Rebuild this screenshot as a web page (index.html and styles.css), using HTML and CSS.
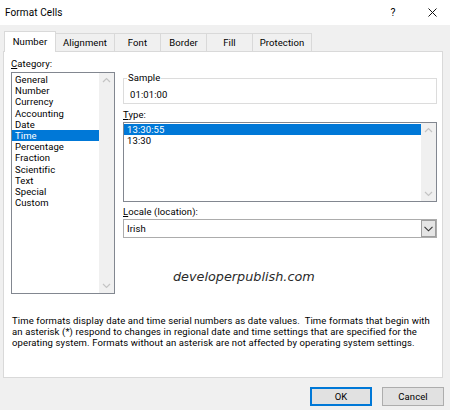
FILE: index.html
```html
<!DOCTYPE html>
<html lang="en">
<head>
<meta charset="utf-8">
<title>Format Cells</title>
<link rel="stylesheet" href="styles.css">
</head>
<body>
<div class="dialog">
  <header class="titlebar">
    <span class="title">Format Cells</span>
    <span class="help">?</span>
    <span class="close" aria-label="Close">
      <svg width="9" height="9" viewBox="0 0 9 9"><path d="M0.5 0.5 L8.5 8.5 M8.5 0.5 L0.5 8.5" stroke="#111" stroke-width="1" fill="none"/></svg>
    </span>
  </header>

  <nav class="tabs">
    <div class="tab tab-active">Number</div>
    <div class="tab tab-wide">Alignment</div>
    <div class="tab">Font</div>
    <div class="tab">Border</div>
    <div class="tab">Fill</div>
    <div class="tab tab-wide">Protection</div>
  </nav>

  <section class="panel">
    <div class="columns">
      <div class="category">
        <div class="label"><u>C</u>ategory:</div>
        <div class="listbox category-list">
          <ul class="items">
            <li>General</li>
            <li>Number</li>
            <li>Currency</li>
            <li>Accounting</li>
            <li>Date</li>
            <li class="selected">Time</li>
            <li>Percentage</li>
            <li>Fraction</li>
            <li>Scientific</li>
            <li>Text</li>
            <li>Special</li>
            <li>Custom</li>
          </ul>
          <div class="vscroll">
            <svg class="arrow" width="15" height="15" viewBox="0 0 15 15"><polyline points="4,9 7.5,5.5 11,9" fill="none" stroke="#c4c4c4" stroke-width="1.2"/></svg>
            <svg class="arrow" width="15" height="15" viewBox="0 0 15 15"><polyline points="4,6 7.5,9.5 11,6" fill="none" stroke="#c4c4c4" stroke-width="1.2"/></svg>
          </div>
        </div>
      </div>

      <div class="detail">
        <fieldset class="sample">
          <legend>Sample</legend>
          <div class="sample-value">01:01:00</div>
        </fieldset>

        <div class="label label-type"><u>T</u>ype:</div>
        <div class="listbox type-list">
          <ul class="items">
            <li class="selected">13:30:55</li>
            <li>13:30</li>
          </ul>
          <div class="vscroll">
            <svg class="arrow" width="15" height="15" viewBox="0 0 15 15"><polyline points="4,9 7.5,5.5 11,9" fill="none" stroke="#c4c4c4" stroke-width="1.2"/></svg>
            <svg class="arrow" width="15" height="15" viewBox="0 0 15 15"><polyline points="4,6 7.5,9.5 11,6" fill="none" stroke="#c4c4c4" stroke-width="1.2"/></svg>
          </div>
        </div>

        <div class="label label-locale"><u>L</u>ocale (location):</div>
        <div class="combo">
          <span class="combo-value">Irish</span>
          <span class="combo-button">
            <svg width="9" height="6" viewBox="0 0 9 6"><polyline points="0.5,0.8 4.5,4.8 8.5,0.8" fill="none" stroke="#333" stroke-width="1.1"/></svg>
          </span>
        </div>

        <div class="watermark">developerpublish.com</div>
      </div>
    </div>

    <p class="description">
      <span>Time formats display date and time serial numbers as date values.&nbsp; Time formats that begin with</span>
      <span>an asterisk (*) respond to changes in regional date and time settings that are specified for the</span>
      <span>operating system. Formats without an asterisk are not affected by operating system settings.</span>
    </p>
  </section>

  <footer class="buttons">
    <button class="btn btn-default">OK</button>
    <button class="btn">Cancel</button>
  </footer>
</div>
</body>
</html>
```

FILE: styles.css
```css
* {
  box-sizing: border-box;
}

html,
body {
  margin: 0;
  padding: 0;
}

body {
  width: 450px;
  height: 410px;
  overflow: hidden;
  background: #f0f0f0;
  font-family: Roboto, "Noto Sans", sans-serif;
  font-size: 9.5px;
  letter-spacing: 0.1px;
  color: #000;
}

/* ---- title bar ---- */
.titlebar {
  height: 25px;
  background: #fff;
  display: flex;
  align-items: center;
  padding-left: 5px;
}

.title {
  flex: 1;
  font-size: 10px;
}

.help {
  width: 12px;
  text-align: center;
  font-size: 10.5px;
  margin-right: 26px;
}

.close {
  width: 14px;
  height: 14px;
  display: flex;
  align-items: center;
  justify-content: center;
  margin-right: 11px;
}

/* ---- tab strip ---- */
.tabs {
  display: flex;
  align-items: flex-end;
  height: 21px;
  margin: 6px 0 -1px 4px;
  position: relative;
  z-index: 1;
}

.tab {
  width: 47px;
  height: 18px;
  margin: 0 -1px 1px 0;
  border: 1px solid #d9d9d9;
  border-bottom: none;
  background: #f0f0f0;
  display: flex;
  align-items: center;
  justify-content: center;
}

.tab-wide {
  width: 60px;
}

.tab-active {
  width: 52px;
  height: 21px;
  margin-bottom: 0;
  background: #fff;
  position: relative;
  z-index: 2;
  padding-bottom: 2px;
}

/* ---- main panel ---- */
.panel {
  margin-left: 3px;
  width: 440px;
  height: 327px;
  background: #fff;
  border: 1px solid #d9d9d9;
  padding: 6px 5px 0 7px;
}

.columns {
  display: grid;
  grid-template-columns: 104px 314px;
  column-gap: 8px;
  align-items: start;
}

.label {
  height: 12px;
  line-height: 12px;
  white-space: nowrap;
}

.label u {
  text-underline-offset: 1px;
}

.category .label {
  margin-bottom: 2px;
}

/* ---- list boxes ---- */
.listbox {
  border: 1px solid #828790;
  background: #fff;
  display: flex;
}

.category-list {
  height: 222px;
}

.type-list {
  height: 80px;
  margin-top: 1px;
}

.items {
  flex: 1;
  list-style: none;
  margin: 0;
  padding: 1px 0 0;
}

.items li {
  height: 11.2px;
  line-height: 11.2px;
  padding-left: 3px;
  white-space: nowrap;
}

.items li.selected {
  background: #0078d7;
  color: #fff;
}

.type-list .items li {
  height: 11px;
  line-height: 11px;
}

.vscroll {
  width: 15px;
  background: #f0f0f0;
  display: flex;
  flex-direction: column;
  justify-content: space-between;
}

.arrow {
  display: block;
}

/* ---- right column ---- */
.detail {
  padding-top: 14px;
}

.sample {
  margin: 0;
  border: 1px solid #dcdcdc;
  padding: 5px 6px 2px;
  min-width: 0;
}

.sample legend {
  padding: 0 1px;
  margin-left: -3px;
  line-height: 12px;
  height: 12px;
}

.sample-value {
  height: 12px;
  line-height: 12px;
}

.label-type {
  margin-top: 5px;
}

.label-locale {
  margin-top: 4px;
}

.combo {
  margin-top: 1px;
  height: 19px;
  border: 1px solid #acacac;
  background: #fff;
  display: flex;
  align-items: stretch;
}

.combo-value {
  flex: 1;
  padding-left: 3px;
  display: flex;
  align-items: center;
}

.combo-button {
  width: 15px;
  background: #e5e5e5;
  border: 1px solid #9e9e9e;
  display: flex;
  align-items: center;
  justify-content: center;
}

.watermark {
  margin-top: 29px;
  padding-left: 50px;
  height: 20px;
  line-height: 20px;
  font-family: "DejaVu Sans", sans-serif;
  font-style: italic;
  font-size: 12.8px;
  letter-spacing: 0;
  color: #2a2a2a;
}

/* ---- description ---- */
.description {
  margin: 21px 0 0 1px;
  line-height: 11.2px;
  letter-spacing: 0.12px;
}

.description span {
  display: block;
  white-space: nowrap;
}

/* ---- buttons ---- */
.buttons {
  display: flex;
  justify-content: flex-end;
  gap: 10px;
  margin-top: 9px;
  padding-right: 6px;
}

.btn {
  width: 62px;
  height: 19px;
  padding: 0;
  font: inherit;
  letter-spacing: 0.1px;
  color: #000;
  background: #e1e1e1;
  border: 1px solid #adadad;
}

.btn-default {
  border: 2px solid #0078d7;
}
```
